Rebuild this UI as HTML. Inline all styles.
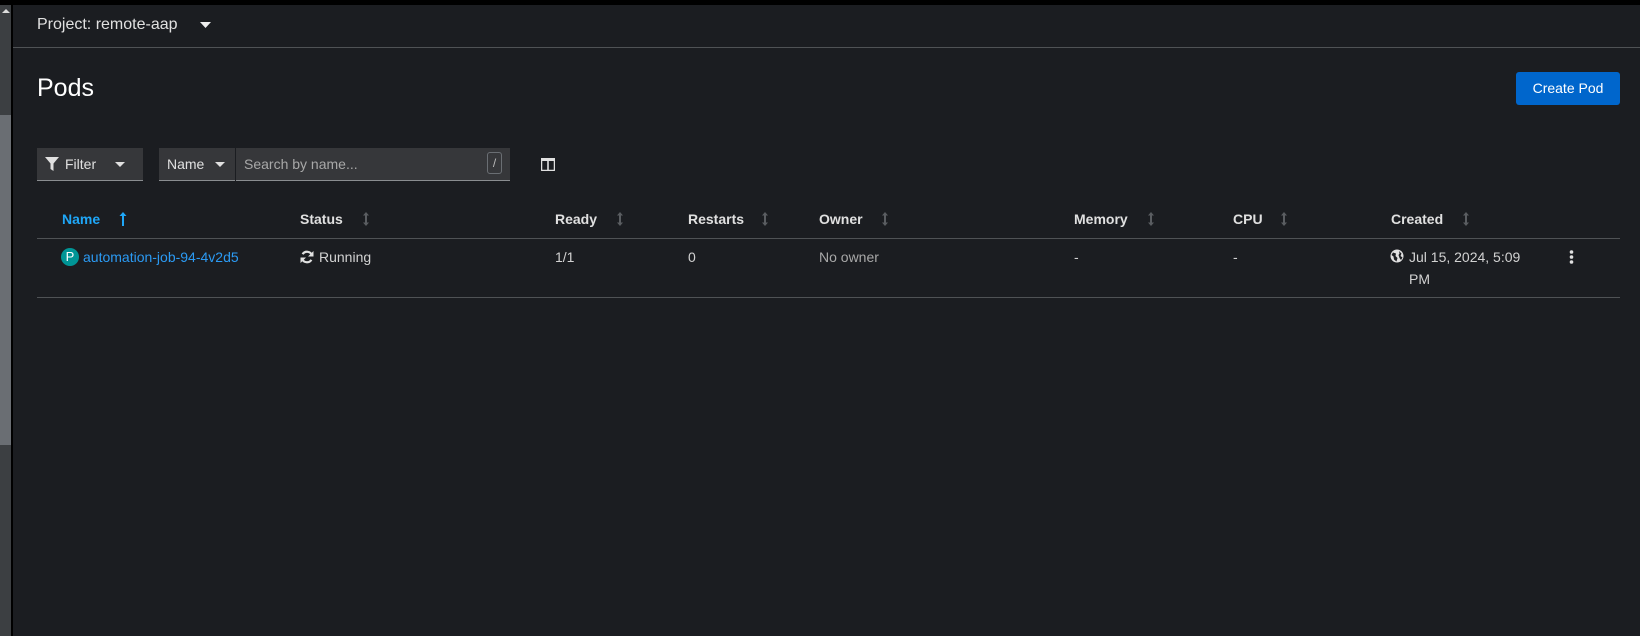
<!DOCTYPE html>
<html><head><meta charset="utf-8"><style>
*{box-sizing:border-box;margin:0;padding:0}
body{width:1640px;height:636px;background:#1b1d21;font-family:"Liberation Sans",sans-serif;color:#e0e0e0;position:relative;overflow:hidden;font-size:14px}
.a{position:absolute;white-space:nowrap}
.th{font-weight:bold;color:#e0e0e0;top:211px}
.si{position:absolute;top:211px;width:10px;height:16px}
.td{top:249px;color:#d2d2d2}
</style></head><body>
<div class="a" style="left:0;top:0;width:1640px;height:5px;background:#000"></div>
<div class="a" style="left:0;top:5px;width:11px;height:631px;background:#3c3f42"></div>
<div class="a" style="left:0;top:115px;width:11px;height:330px;background:#6a6e73"></div>
<div class="a" style="left:11px;top:5px;width:2px;height:631px;background:#000"></div>
<svg class="a" style="left:2px;top:8px" width="8" height="6"><path d="M0 5L4 1L8 5Z" fill="#ddd"/></svg>
<div class="a" style="left:37px;top:16px;font-size:16px;color:#e0e0e0">Project: remote-aap</div>
<svg class="a" style="left:200px;top:22px" width="11" height="7"><path d="M0 0H11L5.5 6Z" fill="#eee"/></svg>
<div class="a" style="left:13px;top:47px;width:1627px;height:1px;background:#4f5255"></div>
<div class="a" style="left:37px;top:74px;font-size:25px;color:#fff">Pods</div>
<div class="a" style="left:1516px;top:72px;width:104px;height:33px;background:#0066cc;border-radius:3px;color:#fff;font-size:14px;text-align:center;line-height:33px">Create Pod</div>
<div class="a" style="left:37px;top:148px;width:106px;height:33px;background:#36373a;border-bottom:1px solid #8a8d90"></div>
<svg class="a" style="left:45px;top:157px" width="14" height="14"><path d="M0 0H14L8.5 6.5V14L5.5 12V6.5Z" fill="#e0e0e0"/></svg>
<div class="a" style="left:65px;top:156px;color:#e0e0e0">Filter</div>
<svg class="a" style="left:115px;top:162px" width="10" height="6"><path d="M0 0H10L5 5Z" fill="#e0e0e0"/></svg>
<div class="a" style="left:159px;top:148px;width:76px;height:33px;background:#36373a;border-bottom:1px solid #8a8d90"></div>
<div class="a" style="left:167px;top:156px;color:#e0e0e0">Name</div>
<svg class="a" style="left:215px;top:162px" width="10" height="6"><path d="M0 0H10L5 5Z" fill="#e0e0e0"/></svg>
<div class="a" style="left:236px;top:148px;width:274px;height:33px;background:#36373a;border-bottom:1px solid #8a8d90"></div>
<div class="a" style="left:244px;top:156px;color:#a8a8a8">Search by name...</div>
<div class="a" style="left:487px;top:152px;width:15px;height:22px;border:1px solid #6a6e73;border-radius:3px;color:#bbb;font-size:12px;text-align:center;line-height:20px">/</div>
<svg class="a" style="left:541px;top:158px" width="14" height="13"><rect x="0.5" y="0.5" width="13" height="12" rx="1" fill="none" stroke="#e0e0e0" stroke-width="1.5"/><rect x="0" y="0" width="14" height="3" fill="#e0e0e0"/><rect x="6.2" y="0" width="1.6" height="13" fill="#e0e0e0"/></svg>
<div class="a th" style="left:62px;color:#1fa7f8">Name</div>
<svg class="si" style="left:118px" viewBox="0 0 10 16"><path d="M5 1L1.5 5H4V15H6V5H8.5Z" fill="#1fa7f8"/></svg>
<div class="a th" style="left:300px">Status</div>
<div class="a th" style="left:555px">Ready</div>
<div class="a th" style="left:688px">Restarts</div>
<div class="a th" style="left:819px">Owner</div>
<div class="a th" style="left:1074px">Memory</div>
<div class="a th" style="left:1233px">CPU</div>
<div class="a th" style="left:1391px">Created</div>
<svg class="si" style="left:361px" viewBox="0 0 10 16"><path d="M5 1L2 4.5H4V11.5H2L5 15L8 11.5H6V4.5H8Z" fill="#5a5d61"/></svg>
<svg class="si" style="left:615px" viewBox="0 0 10 16"><path d="M5 1L2 4.5H4V11.5H2L5 15L8 11.5H6V4.5H8Z" fill="#5a5d61"/></svg>
<svg class="si" style="left:760px" viewBox="0 0 10 16"><path d="M5 1L2 4.5H4V11.5H2L5 15L8 11.5H6V4.5H8Z" fill="#5a5d61"/></svg>
<svg class="si" style="left:880px" viewBox="0 0 10 16"><path d="M5 1L2 4.5H4V11.5H2L5 15L8 11.5H6V4.5H8Z" fill="#5a5d61"/></svg>
<svg class="si" style="left:1146px" viewBox="0 0 10 16"><path d="M5 1L2 4.5H4V11.5H2L5 15L8 11.5H6V4.5H8Z" fill="#5a5d61"/></svg>
<svg class="si" style="left:1279px" viewBox="0 0 10 16"><path d="M5 1L2 4.5H4V11.5H2L5 15L8 11.5H6V4.5H8Z" fill="#5a5d61"/></svg>
<svg class="si" style="left:1461px" viewBox="0 0 10 16"><path d="M5 1L2 4.5H4V11.5H2L5 15L8 11.5H6V4.5H8Z" fill="#5a5d61"/></svg>
<div class="a" style="left:37px;top:238px;width:1583px;height:1px;background:#4f5255"></div>
<div class="a" style="left:61px;top:248px;width:18px;height:18px;border-radius:50%;background:#009596;color:#fff;font-size:13px;text-align:center;line-height:18px">P</div>
<div class="a td" style="left:83px;color:#2b9af3">automation-job-94-4v2d5</div>
<svg class="a" style="left:300px;top:250px" width="14" height="14" viewBox="0 0 14 14"><path d="M12 5.5A5.2 5.2 0 0 0 2.6 4.2M2 8.5A5.2 5.2 0 0 0 11.4 9.8" fill="none" stroke="#e0e0e0" stroke-width="2.2"/><path d="M13.5 1V6.5H8Z M0.5 13V7.5H6Z" fill="#e0e0e0"/></svg>
<div class="a td" style="left:319px">Running</div>
<div class="a td" style="left:555px">1/1</div>
<div class="a td" style="left:688px">0</div>
<div class="a td" style="left:819px;color:#a8a8a8">No owner</div>
<div class="a td" style="left:1074px">-</div>
<div class="a td" style="left:1233px">-</div>
<svg class="a" style="left:1390px;top:249px" width="14" height="14" viewBox="0 0 14 14"><circle cx="7" cy="7" r="6.5" fill="#e0e0e0"/><path d="M3 3.5L6 4.5L5.5 7L7.5 9L6.5 12.5L4 10.5L3.5 7.5L1.5 6Z M9 2L11.5 4.5L10.5 7L12.5 8.5L11 11L9.5 9L8.5 6L9.5 4.5Z" fill="#1b1d21"/></svg>
<div class="a td" style="left:1409px">Jul 15, 2024, 5:09</div>
<div class="a td" style="left:1409px;top:271px">PM</div>
<svg class="a" style="left:1569px;top:250px" width="5" height="14"><circle cx="2.5" cy="2" r="1.8" fill="#e0e0e0"/><circle cx="2.5" cy="7" r="1.8" fill="#e0e0e0"/><circle cx="2.5" cy="12" r="1.8" fill="#e0e0e0"/></svg>
<div class="a" style="left:37px;top:297px;width:1583px;height:1px;background:#4f5255"></div>
</body></html>
